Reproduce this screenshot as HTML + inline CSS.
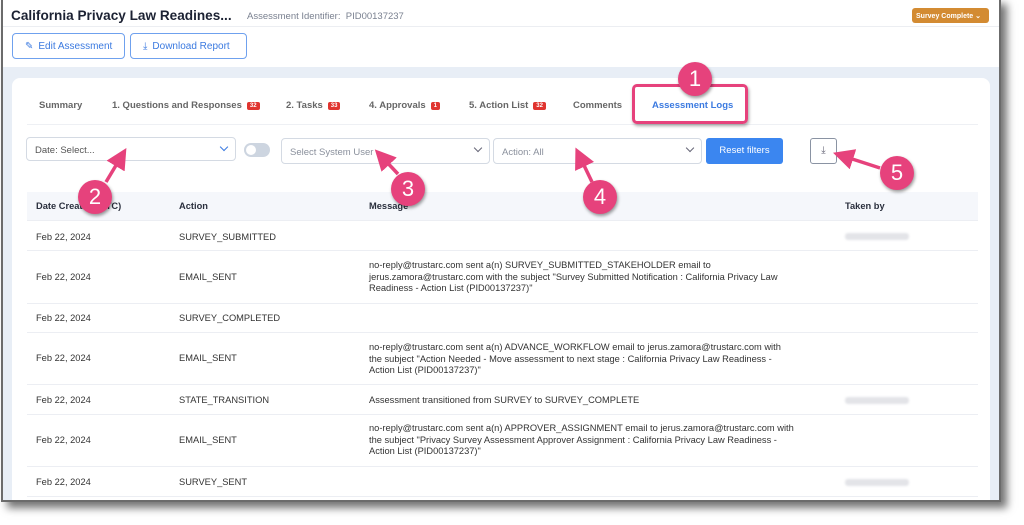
<!DOCTYPE html>
<html><head><meta charset="utf-8"><style>
*{box-sizing:border-box;margin:0;padding:0}
body{width:1024px;height:525px;background:#fff;font-family:"Liberation Sans",sans-serif;position:relative;overflow:hidden;color:#2b2f3a}
.win{position:absolute;left:1px;top:-2px;width:1000px;height:504px;border:2px solid #6b6b6b;background:#e8eef6;box-shadow:6px 6px 8px rgba(0,0,0,.55);overflow:hidden}
.in{position:absolute;left:-3px;top:0;width:1010px;height:510px}
.top{position:absolute;left:0;top:0;width:100%;height:67px;background:#fff}
.abs{position:absolute;white-space:nowrap}
.btn{position:absolute;height:26px;border:1px solid #6fa1ee;border-radius:4px;color:#3b7ae0;font-size:10px;display:flex;align-items:center;padding-left:12px;gap:5px}
.card{position:absolute;left:12px;top:78px;width:978px;height:440px;background:#fff;border-radius:8px}
.tab{position:absolute;top:100px;font-size:9.5px;font-weight:bold;color:#666;white-space:nowrap}
.bd{display:inline-block;background:#e0342f;color:#fff;font-size:6px;padding:1px 3px;border-radius:2px;margin-left:5px;vertical-align:1px}
.sel{position:absolute;height:26px;border:1px solid #d4dae3;border-radius:4px;font-size:9.5px;color:#8a909c;padding:8px 0 0 8px}
.chev{position:absolute;right:8px;top:6px;width:6px;height:6px;border-right:1.3px solid #667;border-bottom:1.3px solid #667;transform:rotate(45deg)}
.row{position:absolute;left:25px;width:951px;border-bottom:1px solid #eceef3;font-size:9.3px;color:#333}
.row span{position:absolute}
.c1{left:9px}.c2{left:152px}.c3{left:342px;line-height:11.5px;white-space:nowrap}.c4{left:818px}
.blur{display:inline-block;width:64px;height:7px;background:#e3e4e8;border-radius:3px;filter:blur(1px)}
.circ{position:absolute;width:34px;height:34px;border-radius:50%;background:#e6427c;color:#fff;font-size:22px;text-align:center;line-height:34px;box-shadow:1px 2px 3px rgba(0,0,0,.4)}
</style></head><body>
<div class="win"><div class="in">
 <div class="top"></div>
 <div class="abs" style="left:11px;top:8px;font-size:13.6px;font-weight:bold;color:#1c2233">California Privacy Law Readines...</div>
 <div class="abs" style="left:247px;top:11px;font-size:9.5px;color:#7a8190">Assessment Identifier:&nbsp; PID00137237</div>
 <div class="abs" style="left:912px;top:8px;width:77px;height:15px;background:#d38b32;border-radius:3px;color:#fff;font-size:7px;font-weight:bold;padding:4px 0 0 4px">Survey Complete ⌄</div>
 <div class="abs" style="left:0;top:26px;width:100%;height:1px;background:#eceef2"></div>
 <div class="btn" style="left:12px;top:33px;width:113px"><span>✎</span>Edit Assessment</div>
 <div class="btn" style="left:130px;top:33px;width:117px"><span>⤓</span>Download Report</div>
 <div class="card"></div>
 <div class="tab" style="left:39px">Summary</div>
 <div class="tab" style="left:112px">1. Questions and Responses<span class="bd">32</span></div>
 <div class="tab" style="left:286px">2. Tasks<span class="bd">33</span></div>
 <div class="tab" style="left:369px">4. Approvals<span class="bd">1</span></div>
 <div class="tab" style="left:469px">5. Action List<span class="bd">32</span></div>
 <div class="tab" style="left:573px">Comments</div>
 <div class="tab" style="left:652px;color:#3b7ae0">Assessment Logs</div>
 <div class="abs" style="left:27px;top:124px;width:951px;height:1px;background:#eef0f4"></div>
 <div class="sel" style="left:26px;top:137px;width:210px;height:24px;color:#555;padding-top:7px">Date: Select...<div class="chev" style="border-color:#3b7ae0"></div></div>
 <div class="abs" style="left:244px;top:143px;width:26px;height:14px;border-radius:7px;background:#cdd5e0"><div style="position:absolute;left:2px;top:2px;width:10px;height:10px;border-radius:50%;background:#fff"></div></div>
 <div class="sel" style="left:281px;top:138px;width:209px">Select System User<div class="chev"></div></div>
 <div class="sel" style="left:493px;top:138px;width:209px">Action: All<div class="chev"></div></div>
 <div class="abs" style="left:706px;top:138px;width:77px;height:26px;background:#3b86f0;border-radius:3px;color:#fff;font-size:9.5px;text-align:center;line-height:26px">Reset filters</div>
 <div class="abs" style="left:810px;top:138px;width:27px;height:26px;border:1px solid #8a93a3;border-radius:3px;font-size:10px;color:#667;text-align:center;line-height:24px">⤓</div>
 <div style="position:absolute;left:2px;top:0">
 <div class="row" style="top:192px;height:29px;background:#f5f7fb;font-weight:bold;font-size:9.3px;color:#2a2f3d"><span class="c1" style="top:9px">Date Created (UTC)</span><span class="c2" style="top:9px">Action</span><span class="c3" style="top:9px">Message</span><span class="c4" style="top:9px">Taken by</span></div>
 <div class="row" style="top:221px;height:30px"><span class="c1" style="top:11px">Feb 22, 2024</span><span class="c2" style="top:11px">SURVEY_SUBMITTED</span><span class="c4" style="top:11px"><i class="blur"></i></span></div>
 <div class="row" style="top:251px;height:53px"><span class="c1" style="top:21px">Feb 22, 2024</span><span class="c2" style="top:21px">EMAIL_SENT</span><span class="c3" style="top:9px">no-reply@trustarc.com sent a(n) SURVEY_SUBMITTED_STAKEHOLDER email to<br>jerus.zamora@trustarc.com with the subject "Survey Submitted Notification : California Privacy Law<br>Readiness - Action List (PID00137237)"</span></div>
 <div class="row" style="top:304px;height:29px"><span class="c1" style="top:9px">Feb 22, 2024</span><span class="c2" style="top:9px">SURVEY_COMPLETED</span></div>
 <div class="row" style="top:333px;height:52px"><span class="c1" style="top:20px">Feb 22, 2024</span><span class="c2" style="top:20px">EMAIL_SENT</span><span class="c3" style="top:9px">no-reply@trustarc.com sent a(n) ADVANCE_WORKFLOW email to jerus.zamora@trustarc.com with<br>the subject "Action Needed - Move assessment to next stage : California Privacy Law Readiness -<br>Action List (PID00137237)"</span></div>
 <div class="row" style="top:385px;height:30px"><span class="c1" style="top:10px">Feb 22, 2024</span><span class="c2" style="top:10px">STATE_TRANSITION</span><span class="c3" style="top:10px">Assessment transitioned from SURVEY to SURVEY_COMPLETE</span><span class="c4" style="top:11px"><i class="blur"></i></span></div>
 <div class="row" style="top:415px;height:52px"><span class="c1" style="top:20px">Feb 22, 2024</span><span class="c2" style="top:20px">EMAIL_SENT</span><span class="c3" style="top:8px">no-reply@trustarc.com sent a(n) APPROVER_ASSIGNMENT email to jerus.zamora@trustarc.com with<br>the subject "Privacy Survey Assessment Approver Assignment : California Privacy Law Readiness -<br>Action List (PID00137237)"</span></div>
 <div class="row" style="top:467px;height:30px"><span class="c1" style="top:10px">Feb 22, 2024</span><span class="c2" style="top:10px">SURVEY_SENT</span><span class="c4" style="top:11px"><i class="blur"></i></span></div>
 </div>
</div></div>
<div class="abs" style="left:632px;top:84px;width:116px;height:40px;border:3px solid #e6427c;border-radius:5px;box-shadow:1px 2px 3px rgba(0,0,0,.35)"></div>
<svg class="abs" style="left:0;top:0" width="1024" height="525">
<defs><marker id="a" markerWidth="6" markerHeight="6" refX="3" refY="3" orient="auto"><path d="M0,0 L6,3 L0,6 z" fill="#e6427c"/></marker></defs>
<g stroke="#e6427c" stroke-width="3.5" marker-end="url(#a)">
<line x1="106" y1="182" x2="121" y2="157"/>
<line x1="398" y1="174" x2="382" y2="157"/>
<line x1="592" y1="182" x2="580" y2="157"/>
<line x1="880" y1="168" x2="843" y2="156"/>
</g></svg>
<div class="circ" style="left:678px;top:62px">1</div>
<div class="circ" style="left:78px;top:180px">2</div>
<div class="circ" style="left:391px;top:172px">3</div>
<div class="circ" style="left:583px;top:180px">4</div>
<div class="circ" style="left:880px;top:156px">5</div>
</body></html>
